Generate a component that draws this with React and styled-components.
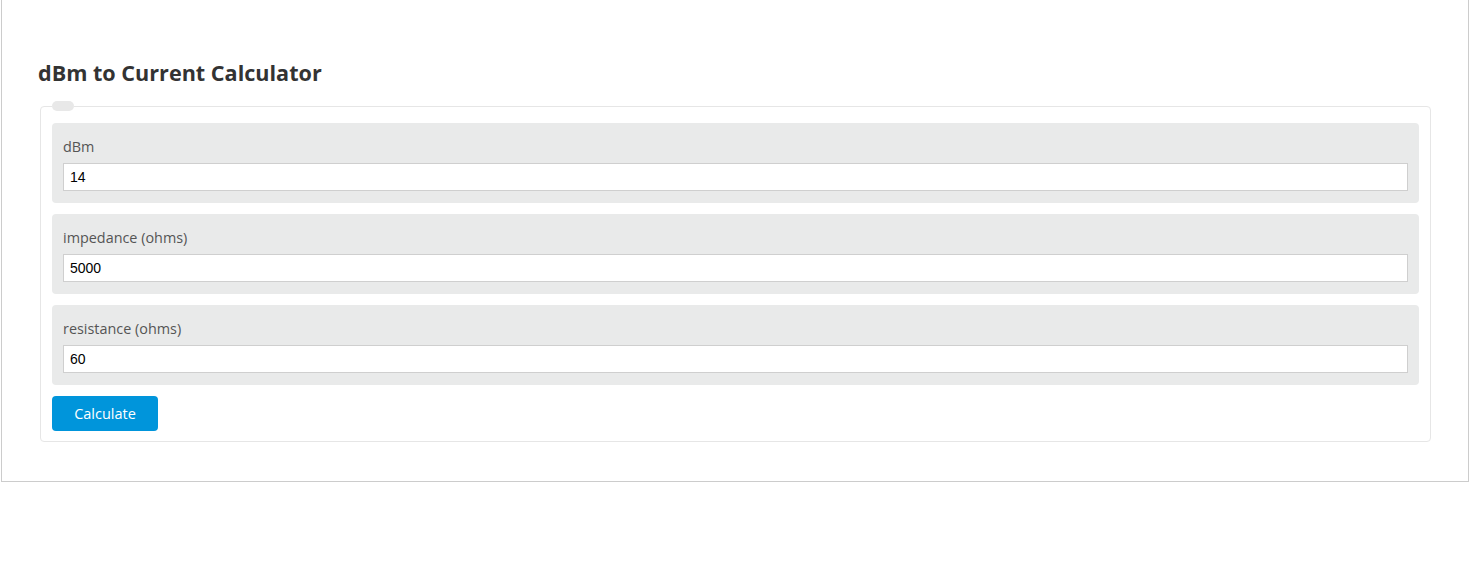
import React from "react";
import styled, { createGlobalStyle } from "styled-components";

const Global = createGlobalStyle`
  body {
    margin: 0;
    padding: 0 0 0 1px;
    background: #fff;
    font-family: "Open Sans", "Noto Sans", sans-serif;
  }
  * { box-sizing: border-box; }
`;

const Panel = styled.div`
  width: 1468px;
  border: 1px solid #cccccc;
  border-top: none;
  padding: 58px 36px 39px 36px;
`;

const Title = styled.h2`
  margin: 0 0 13px 0;
  font-size: 21.6px;
  line-height: 30px;
  font-weight: 700;
  color: #333;
`;

const Form = styled.fieldset`
  margin: 0 1px 0 2px;
  padding: 12px 11px 10px 11px;
  border: 1px solid #e6e6e6;
  border-radius: 4px;
  min-width: 0;
`;

const Legend = styled.legend`
  width: 22px;
  height: 10px;
  padding: 0;
  background: #e8e8e8;
  border-radius: 5px;
`;

const Group = styled.div`
  background: #e9eaea;
  border-radius: 4px;
  padding: 14px 11px 12px 11px;
  margin-bottom: 11px;
`;

const Label = styled.label`
  display: block;
  font-size: 14.4px;
  line-height: 20px;
  color: #555;
  margin-bottom: 6px;
`;

const Input = styled.input`
  display: block;
  width: 100%;
  height: 28px;
  border: 1px solid #cfcfcf;
  background: #fff;
  padding: 0 6px;
  font-family: "Liberation Sans", Arial, sans-serif;
  font-size: 14px;
  color: #000;
  outline: none;
`;

const Button = styled.button`
  width: 106px;
  height: 35px;
  border: none;
  border-radius: 4px;
  background: #0095db;
  color: #fff;
  font-family: "Open Sans", "Noto Sans", sans-serif;
  font-size: 14.5px;
  cursor: pointer;
  padding: 0;
`;

const fields = [
  { label: "dBm", value: "14" },
  { label: "impedance (ohms)", value: "5000" },
  { label: "resistance (ohms)", value: "60" },
];

export default function App() {
  return (
    <>
      <Global />
      <Panel>
        <Title>dBm to Current Calculator</Title>
        <Form>
          <Legend />
          {fields.map((f) => (
            <Group key={f.label}>
              <Label>{f.label}</Label>
              <Input defaultValue={f.value} />
            </Group>
          ))}
          <Button>Calculate</Button>
        </Form>
      </Panel>
    </>
  );
}
